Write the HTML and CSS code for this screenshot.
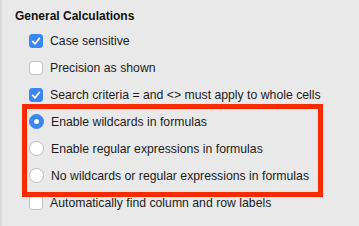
FILE: index.html
```html
<!DOCTYPE html>
<html>
<head>
<meta charset="utf-8">
<link rel="stylesheet" href="styles.css">
</head>
<body>
<div class="panel">
  <h2 class="title">General Calculations</h2>
  <div class="options">
    <div class="row"><span class="box checked"><svg viewBox="0 0 14 14" width="14" height="14"><path d="M3.6 7.4 L6 9.8 L10.4 4.4" fill="none" stroke="#fff" stroke-width="1.7" stroke-linecap="round" stroke-linejoin="round"/></svg></span><span class="label">Case sensitive</span></div>
    <div class="row"><span class="box"></span><span class="label">Precision as shown</span></div>
    <div class="row"><span class="box checked"><svg viewBox="0 0 14 14" width="14" height="14"><path d="M3.6 7.4 L6 9.8 L10.4 4.4" fill="none" stroke="#fff" stroke-width="1.7" stroke-linecap="round" stroke-linejoin="round"/></svg></span><span class="label">Search criteria = and &lt;&gt; must apply to whole cells</span></div>
    <div class="row"><span class="radio on"></span><span class="label">Enable wildcards in formulas</span></div>
    <div class="row"><span class="radio"></span><span class="label">Enable regular expressions in formulas</span></div>
    <div class="row"><span class="radio"></span><span class="label">No wildcards or regular expressions in formulas</span></div>
    <div class="row"><span class="box"></span><span class="label">Automatically find column and row labels</span></div>
  </div>
  <div class="highlight"></div>
</div>
</body>
</html>
```
FILE: styles.css
```css
html, body {
  margin: 0;
  padding: 0;
  background: #e9e9e9;
}
.panel {
  position: relative;
  width: 359px;
  height: 226px;
  box-sizing: border-box;
  border-left: 2px solid #dadada;
  background: #e9e9e9;
  font-family: "Liberation Sans", Arial, sans-serif;
  font-size: 12.25px;
  color: #1c1c1c;
  padding-top: 9px;
  overflow: hidden;
}
.title {
  margin: 0 0 0 13px;
  font-size: 12px;
  line-height: 14px;
  font-weight: bold;
  color: #111;
}
.options {
  display: flex;
  flex-direction: column;
  margin-top: 4px;
  padding-left: 27px;
}
.row {
  display: flex;
  align-items: center;
  height: 27px;
  gap: 7px;
}
.label {
  line-height: 14px;
  position: relative;
  top: 0.5px;
}
.box {
  width: 14px;
  height: 14px;
  box-sizing: border-box;
  border-radius: 3px;
  background: #fff;
  border: 1px solid #c4c4c4;
  flex: none;
  display: flex;
}
.box.checked {
  background: #3b86f6;
  border-color: #3b86f6;
}
.box svg {
  margin: -1px;
}
.radio {
  width: 15px;
  height: 15px;
  box-sizing: border-box;
  border-radius: 50%;
  background: #fff;
  border: 1px solid #bfbfbf;
  flex: none;
  position: relative;
  left: -0.5px;
}
.radio.on {
  background: #3b86f6;
  border-color: #3b86f6;
}
.radio.on::after {
  content: "";
  position: absolute;
  left: 4px;
  top: 4px;
  width: 5px;
  height: 5px;
  border-radius: 50%;
  background: #fff;
}
.highlight {
  position: absolute;
  left: 20px;
  top: 104px;
  width: 301px;
  height: 93px;
  box-sizing: border-box;
  border: 5px solid #fb2a00;
}
```
